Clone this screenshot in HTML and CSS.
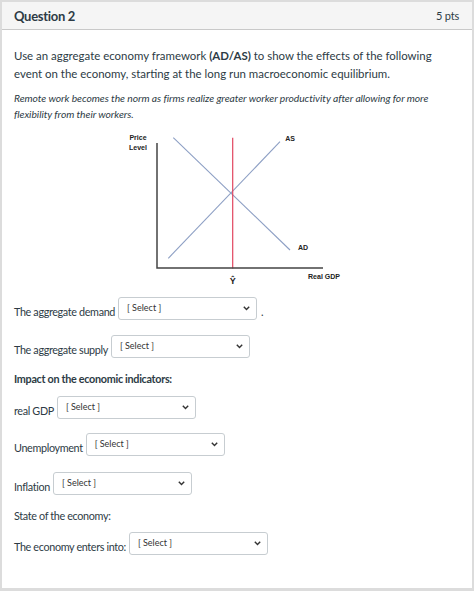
FILE: index.html
```html
<!DOCTYPE html>
<html>
<head>
<meta charset="utf-8">
<link rel="stylesheet" href="styles.css">
</head>
<body>
<div class="question">
  <div class="q-header">
    <span class="q-title">Question 2</span>
    <span class="q-pts">5 pts</span>
  </div>
  <div class="q-body">
    <p class="lead">Use an aggregate economy framework <strong class="em">(AD/AS)</strong> to show the effects of the following event on the economy, starting at the long run macroeconomic equilibrium.</p>
    <p class="event">Remote work becomes the norm as firms realize greater worker productivity after allowing for more flexibility from their workers.</p>
    <svg class="chart" width="240" height="160" viewBox="0 0 240 160">
      <text class="lbl" x="28" y="10" text-anchor="middle">Price</text>
      <text class="lbl" x="28" y="20" text-anchor="middle">Level</text>
      <text class="lbl" x="180" y="11" text-anchor="middle">AS</text>
      <text class="lbl" x="193" y="120" text-anchor="middle">AD</text>
      <text class="lbl" x="214" y="149" text-anchor="middle">Real GDP</text>
      <text class="lbl yhat" x="122.7" y="154" text-anchor="middle">Ŷ</text>
      <line x1="63.3" y1="7.7" x2="180" y2="120" stroke="#8d9fc4" stroke-width="1.1"/>
      <line x1="58.3" y1="128.3" x2="170" y2="11.7" stroke="#8d9fc4" stroke-width="1.1"/>
      <line x1="122.7" y1="7.7" x2="122.7" y2="138.5" stroke="#e2455f" stroke-width="1.2"/>
      <polyline points="47,13 47,138 213,138" fill="none" stroke="#444" stroke-width="1.5"/>
    </svg>
    <div class="row r1"><span class="label">The aggregate demand</span><span class="select"><span class="ph">[ Select ]</span><svg class="chev" width="7" height="5" viewBox="0 0 7 5"><path d="M0.8 0.8 L3.5 3.6 L6.2 0.8" fill="none" stroke="#333" stroke-width="1.4"/></svg></span><span class="dot">.</span></div>
    <div class="row r2"><span class="label">The aggregate supply</span><span class="select"><span class="ph">[ Select ]</span><svg class="chev" width="7" height="5" viewBox="0 0 7 5"><path d="M0.8 0.8 L3.5 3.6 L6.2 0.8" fill="none" stroke="#333" stroke-width="1.4"/></svg></span></div>
    <p class="heading">Impact on the economic indicators:</p>
    <div class="row r3"><span class="label">real GDP</span><span class="select"><span class="ph">[ Select ]</span><svg class="chev" width="7" height="5" viewBox="0 0 7 5"><path d="M0.8 0.8 L3.5 3.6 L6.2 0.8" fill="none" stroke="#333" stroke-width="1.4"/></svg></span></div>
    <div class="row r4"><span class="label">Unemployment</span><span class="select"><span class="ph">[ Select ]</span><svg class="chev" width="7" height="5" viewBox="0 0 7 5"><path d="M0.8 0.8 L3.5 3.6 L6.2 0.8" fill="none" stroke="#333" stroke-width="1.4"/></svg></span></div>
    <div class="row r5"><span class="label">Inflation</span><span class="select"><span class="ph">[ Select ]</span><svg class="chev" width="7" height="5" viewBox="0 0 7 5"><path d="M0.8 0.8 L3.5 3.6 L6.2 0.8" fill="none" stroke="#333" stroke-width="1.4"/></svg></span></div>
    <p class="state">State of the economy:</p>
    <div class="row r6"><span class="label">The economy enters into:</span><span class="select"><span class="ph">[ Select ]</span><svg class="chev" width="7" height="5" viewBox="0 0 7 5"><path d="M0.8 0.8 L3.5 3.6 L6.2 0.8" fill="none" stroke="#333" stroke-width="1.4"/></svg></span></div>
  </div>
</div>
</body>
</html>
```
FILE: styles.css
```css
html, body {
  margin: 0;
  padding: 0;
  background: #fff;
}
body {
  font-family: Lato, "Open Sans", sans-serif;
  color: #2d3b45;
}
.question {
  box-sizing: border-box;
  width: 474px;
  height: 591px;
  border: 2px solid #dcdcdc;
  border-bottom-width: 3px;
  overflow: hidden;
}
.q-header {
  height: 27px;
  background: #f5f5f5;
  border-bottom: 1px solid #c9c9c9;
  display: flex;
  align-items: center;
  justify-content: space-between;
  padding: 0 13px 0 12px;
}
.q-title {
  font-size: 13px;
  font-weight: bold;
  letter-spacing: -0.3px;
  color: #2d3b45;
}
.q-pts {
  font-size: 11px;
  letter-spacing: -0.2px;
  color: #2d3b45;
}
.q-body {
  padding: 0 12px;
}
.lead {
  margin: 17px 0 0;
  font-size: 11.45px;
  line-height: 18px;
}
.em {
  font-weight: bold;
}
.event {
  margin: 7px 0 0;
  font-size: 10.3px;
  letter-spacing: -0.05px;
  font-style: italic;
  line-height: 16px;
}
.chart {
  display: block;
  margin: 8px 0 0 96px;
}
.lbl {
  font-family: "Liberation Sans", Arial, sans-serif;
  font-size: 7px;
  font-weight: bold;
  fill: #222;
}
.yhat {
  font-size: 9px;
}
.row {
  display: flex;
  align-items: center;
  height: 23px;
  font-size: 10.8px;
  letter-spacing: -0.35px;
}
.label {
  padding-top: 5px;
  margin-right: 3px;
}
.select {
  box-sizing: border-box;
  width: 139px;
  height: 23px;
  border: 1px solid #c7cdd1;
  border-radius: 3px;
  background: #fff;
  display: flex;
  align-items: center;
  justify-content: space-between;
  padding: 0 6px 0 8px;
  letter-spacing: 0;
}
.ph {
  font-size: 9px;
  color: #333;
  margin-top: -2px;
}
.chev {
  display: block;
}
.dot {
  margin-left: 4px;
  padding-top: 5px;
}
.r1 { margin-top: 7px; }
.r2 { margin-top: 15px; }
.heading {
  margin: 13px 0 0;
  font-size: 10.8px;
  letter-spacing: -0.3px;
  font-weight: bold;
  line-height: 16px;
}
.r3 { margin-top: 9px; }
.r4 { margin-top: 14px; }
.r5 { margin-top: 16px; }
.state {
  margin: 13px 0 0;
  font-size: 10.8px;
  letter-spacing: -0.35px;
  line-height: 16px;
}
.r6 { margin-top: 8px; }
```
